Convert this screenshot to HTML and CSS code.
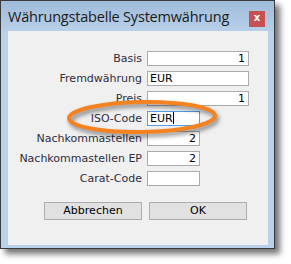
FILE: index.html
```html
<!DOCTYPE html>
<html lang="de">
<head>
  <meta charset="UTF-8">
  <title>Währungstabelle Systemwährung</title>
  <link rel="stylesheet" href="styles.css">
</head>
<body>
  <div class="window">
    <div class="titlebar">
      <span class="title">Währungstabelle Systemwährung</span>
      <span class="close">x</span>
    </div>

    <div class="client">
      <div class="form">
        <label>Basis</label>
        <div class="field wide num">1</div>

        <label>Fremdwährung</label>
        <div class="field wide">EUR</div>

        <label>Preis</label>
        <div class="field wide num">1</div>

        <label>ISO-Code</label>
        <div class="field narrow focus">EUR<span class="caret"></span></div>

        <label>Nachkommastellen</label>
        <div class="field narrow num">2</div>

        <label>Nachkommastellen EP</label>
        <div class="field narrow num">2</div>

        <label>Carat-Code</label>
        <div class="field narrow"></div>
      </div>

      <div class="buttons">
        <div class="btn">Abbrechen</div>
        <div class="btn">OK</div>
      </div>
    </div>
  </div>

  <!-- Markierung um ISO-Code -->
  <svg class="marker" width="160" height="44" viewBox="0 0 160 44">
    <ellipse cx="76" cy="18" rx="73" ry="15" transform="rotate(-1 76 18)" />
  </svg>
</body>
</html>
```

FILE: styles.css
```css
body {
  margin: 0;
  background: #fff;
  font-family: 'DejaVu Sans', Verdana, sans-serif;
  position: relative;
  width: 291px;
  height: 264px;
  overflow: hidden;
}

.window {
  width: 260px;
  border: 1px solid #3a3a3a;
  padding: 0 6px 3px 7px;
  background: #b9d1ea;
  box-shadow: 5px 5px 6px rgba(0, 0, 0, 0.55);
}

.titlebar {
  height: 30px;
  display: flex;
  align-items: flex-start;
  justify-content: space-between;
  background: linear-gradient(#9fbcda, #b8cfe8);
  margin: 0 -6px 0 -7px;
  padding: 0 9px 0 7px;
}

.title {
  font-family: 'Open Sans', sans-serif;
  font-size: 14.5px;
  color: #1a1a1a;
  margin-top: 6px;
  letter-spacing: -0.2px;
}

.close {
  width: 16px;
  height: 16px;
  margin-top: 10px;
  background: #c75050;
  color: #fff;
  font-size: 10px;
  font-weight: bold;
  line-height: 14px;
  text-align: center;
}

.client {
  height: 214px;
  background: #f0f0f0;
  box-sizing: border-box;
  padding-top: 20px;
}

.form {
  display: grid;
  grid-template-columns: 134px auto;
  column-gap: 5px;
  row-gap: 5px;
}

.form label {
  text-align: right;
  font-size: 11px;
  line-height: 15px;
  color: #2e2e3e;
  white-space: nowrap;
}

.field {
  height: 15px;
  box-sizing: border-box;
  border: 1px solid #ababab;
  background: #fff;
  font-size: 11px;
  line-height: 13px;
  padding: 0 3px 0 2px;
  color: #000;
}
.field.wide { width: 102px; }
.field.narrow { width: 53px; }
.field.num { text-align: right; }
.field.focus { border-color: #569de5; }

.caret {
  display: inline-block;
  width: 1px;
  height: 12px;
  background: #000;
  vertical-align: -2px;
}

.buttons {
  display: flex;
  gap: 7px;
  margin: 16px 0 0 36px;
}

.btn {
  width: 98px;
  height: 18px;
  box-sizing: border-box;
  border: 1px solid #adadad;
  background: #e1e1e1;
  font-size: 11px;
  line-height: 16px;
  text-align: center;
  color: #000;
}

.marker {
  position: absolute;
  left: 66px;
  top: 99px;
  overflow: visible;
  filter: drop-shadow(2px 3px 2px rgba(0, 0, 0, 0.45));
}
.marker ellipse {
  fill: none;
  stroke: #f58220;
  stroke-width: 4;
}
```
